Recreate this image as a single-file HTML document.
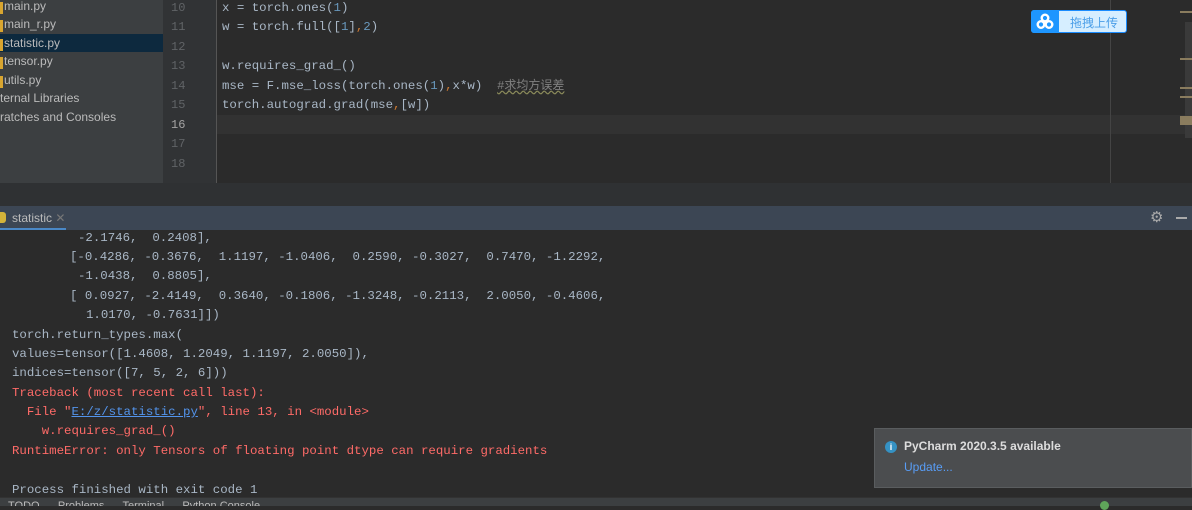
<!DOCTYPE html>
<html><head><meta charset="utf-8"><style>
*{margin:0;padding:0;box-sizing:border-box}
body{width:1192px;height:506px;overflow:hidden;background:#2b2b2b;position:relative;font-family:"Liberation Sans","Noto Sans CJK SC",sans-serif}
.a{position:absolute;white-space:pre}
.m{font-family:"Liberation Mono","Noto Sans CJK SC",monospace;font-size:12.4px;color:#a9b7c6;line-height:15px;height:15px}
.p{font-size:12px;color:#bbbbbb}
.n{color:#606366;font-family:"Liberation Mono",monospace;font-size:12px}
.r{color:#ff6b68}
.num{color:#6897bb}
.c{color:#808080;font-size:12px}
</style></head><body>
<div class="a" style="left:0;top:0;width:163px;height:206px;background:#3c3f41"></div>
<div class="a" style="left:0;top:34px;width:163px;height:18px;background:#0d293e"></div>
<div class="a p" style="left:4px;top:-1px">main.py</div>
<div class="a p" style="left:4px;top:17px">main_r.py</div>
<div class="a p" style="left:4px;top:36px">statistic.py</div>
<div class="a p" style="left:4px;top:54px">tensor.py</div>
<div class="a p" style="left:4px;top:73px">utils.py</div>
<div class="a p" style="left:0;top:91px">ternal Libraries</div>
<div class="a p" style="left:0;top:110px">ratches and Consoles</div>
<div class="a" style="left:0;top:2px;width:3px;height:12px;background:#d8a530"></div>
<div class="a" style="left:0;top:20px;width:3px;height:12px;background:#d8a530"></div>
<div class="a" style="left:0;top:39px;width:3px;height:12px;background:#d8a530"></div>
<div class="a" style="left:0;top:57px;width:3px;height:12px;background:#d8a530"></div>
<div class="a" style="left:0;top:76px;width:3px;height:12px;background:#d8a530"></div>
<div class="a" style="left:163px;top:0;width:54px;height:183px;background:#313335"></div>
<div class="a" style="left:216px;top:0;width:1px;height:183px;background:#555"></div>
<div class="a" style="left:217px;top:115px;width:975px;height:19px;background:#323232"></div>
<div class="a" style="left:1110px;top:0;width:1px;height:183px;background:#444"></div>
<div class="a" style="left:1185px;top:22px;width:7px;height:116px;background:#3a3a3a"></div>
<div class="a" style="left:1180px;top:11px;width:12px;height:2px;background:#8a7c5e"></div>
<div class="a" style="left:1180px;top:58px;width:12px;height:2px;background:#8a7c5e"></div>
<div class="a" style="left:1180px;top:87px;width:12px;height:2px;background:#8a7c5e"></div>
<div class="a" style="left:1180px;top:96px;width:12px;height:2px;background:#8a7c5e"></div>
<div class="a" style="left:1180px;top:116px;width:12px;height:9px;background:#8a7c5e"></div>
<div class="a n" style="left:171px;top:1px">10</div>
<div class="a n" style="left:171px;top:20px">11</div>
<div class="a n" style="left:171px;top:40px">12</div>
<div class="a n" style="left:171px;top:59px">13</div>
<div class="a n" style="left:171px;top:79px">14</div>
<div class="a n" style="left:171px;top:98px">15</div>
<div class="a n" style="left:171px;top:118px;color:#a4a3a3">16</div>
<div class="a n" style="left:171px;top:137px">17</div>
<div class="a n" style="left:171px;top:157px">18</div>
<div class="a m" style="left:222px;top:1px">x = torch.ones(<span class="num">1</span>)</div>
<div class="a m" style="left:222px;top:20px">w = torch.full([<span class="num">1</span>]<span style="color:#cc7832">,</span><span class="num">2</span>)</div>
<div class="a m" style="left:222px;top:59px">w.requires_grad_()</div>
<div class="a m" style="left:222px;top:79px">mse = F.mse_loss(torch.ones(<span class="num">1</span>)<span style="color:#cc7832">,</span>x*w)  <span class="c" style="text-decoration:underline wavy #8a8a5a">#求均方误差</span></div>
<div class="a m" style="left:222px;top:98px">torch.autograd.grad(mse<span style="color:#cc7832">,</span>[w])</div>
<div class="a" style="left:1031px;top:10px;width:96px;height:23px;border:1px solid #1a8cff;border-radius:3px;background:#d6eeff"></div>
<div class="a" style="left:1031px;top:10px;width:28px;height:23px;background:#1e96ff;border-radius:3px 0 0 3px"></div>
<svg class="a" style="left:1036px;top:13px" width="18" height="17" viewBox="0 0 18 17"><g fill="none" stroke="#fff" stroke-width="2.4"><circle cx="9" cy="5" r="3.3"/><circle cx="5" cy="11.5" r="3.3"/><circle cx="13" cy="11.5" r="3.3"/></g></svg>
<div class="a" style="left:1070px;top:14px;font-size:12px;color:#4a9ee8">拖拽上传</div>
<div class="a" style="left:0;top:183px;width:1192px;height:23px;background:#2f3133"></div>
<div class="a" style="left:0;top:206px;width:1192px;height:24px;background:#3c4654"></div>
<div class="a" style="left:0;top:228px;width:66px;height:2px;background:#4a88c7"></div>
<div class="a" style="left:0;top:212px;width:6px;height:11px;background:#d4b33a;border-radius:0 3px 3px 0"></div>
<div class="a" style="left:12px;top:211px;font-size:12px;color:#bbb">statistic <span style="color:#777">✕</span></div>
<div class="a" style="left:1150px;top:208px;font-size:15px;color:#aaa">⚙</div>
<div class="a" style="left:1176px;top:217px;width:11px;height:2px;background:#aaa"></div>
<div class="a m" style="left:78px;top:231px">-2.1746,  0.2408],</div>
<div class="a m" style="left:70px;top:250px">[-0.4286, -0.3676,  1.1197, -1.0406,  0.2590, -0.3027,  0.7470, -1.2292,</div>
<div class="a m" style="left:78px;top:269px">-1.0438,  0.8805],</div>
<div class="a m" style="left:70px;top:289px">[ 0.0927, -2.4149,  0.3640, -0.1806, -1.3248, -0.2113,  2.0050, -0.4606,</div>
<div class="a m" style="left:86px;top:308px">1.0170, -0.7631]])</div>
<div class="a m" style="left:12px;top:328px">torch.return_types.max(</div>
<div class="a m" style="left:12px;top:347px">values=tensor([1.4608, 1.2049, 1.1197, 2.0050]),</div>
<div class="a m" style="left:12px;top:366px">indices=tensor([7, 5, 2, 6]))</div>
<div class="a m r" style="left:12px;top:386px">Traceback (most recent call last):</div>
<div class="a m r" style="left:12px;top:405px">  File "<span style="color:#5394ec;text-decoration:underline">E:/z/statistic.py</span>", line 13, in &lt;module&gt;</div>
<div class="a m r" style="left:12px;top:424px">    w.requires_grad_()</div>
<div class="a m r" style="left:12px;top:444px">RuntimeError: only Tensors of floating point dtype can require gradients</div>
<div class="a m" style="left:12px;top:483px">Process finished with exit code 1</div>
<div class="a" style="left:874px;top:428px;width:318px;height:60px;background:#4b4d4f;border:1px solid #5a5d5f"></div>
<div class="a" style="left:885px;top:441px;width:12px;height:12px;border-radius:6px;background:#3592c4;color:#fff;font-size:9px;text-align:center;line-height:12px;font-weight:bold">i</div>
<div class="a" style="left:904px;top:439px;font-size:12px;color:#ddd;font-weight:bold">PyCharm 2020.3.5 available</div>
<div class="a" style="left:904px;top:460px;font-size:12px;color:#589df6">Update...</div>
<div class="a" style="left:0;top:497px;width:1192px;height:9px;background:#3c3f41;border-top:1px solid #323232;overflow:hidden"></div>
<div class="a" style="left:8px;top:499px;font-size:11px;color:#bbb;height:7px;overflow:hidden;line-height:14px">TODO      Problems      Terminal      Python Console</div>
<div class="a" style="left:1100px;top:501px;width:9px;height:9px;border-radius:5px;background:#5fa55a"></div>
</body></html>
